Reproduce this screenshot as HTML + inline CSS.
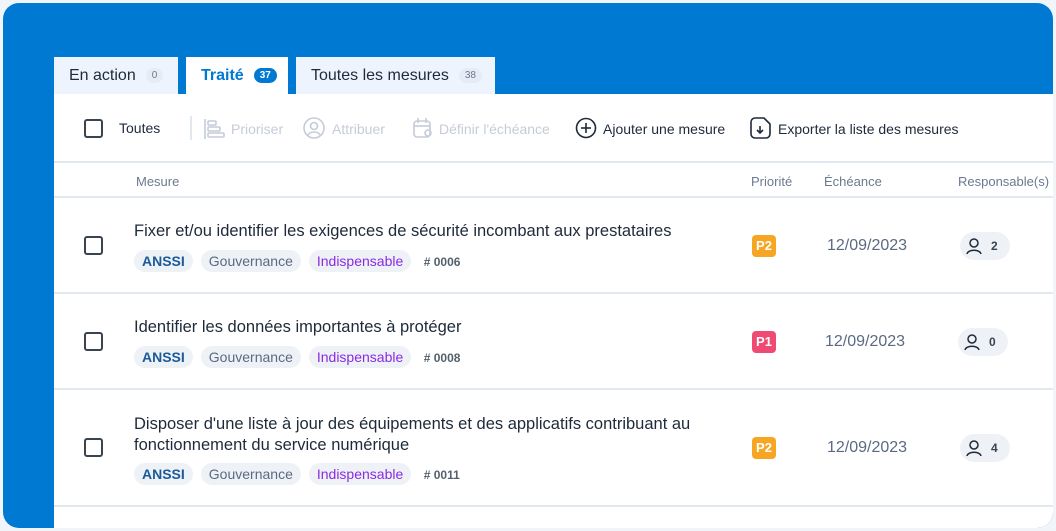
<!DOCTYPE html><html><head><style>
*{margin:0;padding:0;box-sizing:border-box}
body{width:1056px;height:531px;background:#f1f4f9;font-family:"Liberation Sans",sans-serif;position:relative;overflow:hidden;color:#1e2a3a}
.frame{position:absolute;left:3px;top:3px;width:1050px;height:525px;background:#0079d3;border-radius:16px;overflow:hidden}
.panel{position:absolute;left:51px;top:91px;right:0;bottom:0;background:#fff}
.tab{position:absolute;top:54px;height:37px;background:#eef4fd;font-size:16px;display:flex;align-items:center;padding-left:15px;color:#1e2a3a}
.tab.act{background:#fff;color:#0079d3;font-weight:bold}
.cnt{display:inline-block;font-size:10px;border-radius:9px;padding:2px 6px;margin-left:10px;background:#e6ecf5;color:#6b7a90;font-weight:normal}
.act .cnt{background:#0079d3;color:#fff;font-weight:bold}
.a{position:absolute;white-space:nowrap}
.cb{position:absolute;width:19px;height:19px;border:2px solid #3a4350;border-radius:3px}
.hl{position:absolute;left:54px;right:3px;height:2px;background:#e2e8f0}
.tb{font-size:14px;color:#c5ccd8}
.tb2{font-size:14px;color:#1e2a3a}
.hd{font-size:13px;color:#6b7a90}
.t{font-size:16.5px;color:#1e2a3a}
.tag{display:inline-block;font-size:14px;padding:3px 8px;border-radius:11px;background:#eef2f7;margin-right:8px}
.num{font-size:12px;color:#55606e;font-weight:bold}
.p{position:absolute;width:24px;height:22px;border-radius:4px;color:#fff;font-size:13px;font-weight:bold;text-align:center;line-height:22px}
.date{font-size:16px;color:#5a6a82}
.resp{position:absolute;width:50px;height:28px;border-radius:14px;background:#eef2f7;font-size:12px;font-weight:bold;color:#3a4350}
</style></head><body>
<div class="frame">
<div class="tab" style="left:51px;width:124px">En action<span class="cnt">0</span></div>
<div class="tab act" style="left:183px;width:102px">Traité<span class="cnt">37</span></div>
<div class="tab" style="left:293px;width:199px">Toutes les mesures<span class="cnt">38</span></div>
<div class="panel"></div>
</div>
<div class="cb" style="left:84px;top:119px"></div>
<div class="a tb2" style="left:119px;top:120px">Toutes</div>
<div class="a" style="left:190px;top:116px;width:2px;height:24px;background:#e2e8f0"></div>
<svg class="a" style="left:203px;top:118px" width="22" height="22" fill="none" stroke="#c5ccd8" stroke-width="1.6"><line x1="2" y1="1" x2="2" y2="21"/><rect x="5" y="3" width="8" height="4" rx="1"/><rect x="5" y="9" width="12" height="4" rx="1"/><rect x="5" y="15" width="16" height="4" rx="1"/></svg>
<div class="a tb" style="left:231px;top:121px">Prioriser</div>
<svg class="a" style="left:303px;top:117px" width="22" height="22" fill="none" stroke="#c5ccd8" stroke-width="1.6"><circle cx="11" cy="11" r="10"/><circle cx="11" cy="9" r="3.5"/><path d="M5 18c2-4 10-4 12 0"/></svg>
<div class="a tb" style="left:332px;top:121px">Attribuer</div>
<svg class="a" style="left:412px;top:117px" width="22" height="22" fill="none" stroke="#c5ccd8" stroke-width="1.6"><rect x="2" y="4" width="16" height="16" rx="3"/><line x1="6" y1="1" x2="6" y2="6"/><line x1="14" y1="1" x2="14" y2="6"/><line x1="2" y1="9" x2="18" y2="9"/><circle cx="16" cy="16" r="3"/></svg>
<div class="a tb" style="left:439px;top:121px">Définir l'échéance</div>
<svg class="a" style="left:575px;top:117px" width="22" height="22" fill="none" stroke="#1e2a3a" stroke-width="1.6"><circle cx="11" cy="11" r="9.5"/><line x1="11" y1="6" x2="11" y2="16"/><line x1="6" y1="11" x2="16" y2="11"/></svg>
<div class="a tb2" style="left:603px;top:121px">Ajouter une mesure</div>
<svg class="a" style="left:750px;top:116px" width="22" height="24" fill="none" stroke="#1e2a3a" stroke-width="1.6"><path d="M5 2h9l6 6v10a4 4 0 0 1-4 4H5a4 4 0 0 1-4-4V6a4 4 0 0 1 4-4z"/><path d="M10 10v7M7 14l3 3 3-3"/></svg>
<div class="a tb2" style="left:778px;top:121px">Exporter la liste des mesures</div>
<div class="hl" style="top:161px"></div>
<div class="a hd" style="left:136px;top:174px">Mesure</div>
<div class="a hd" style="left:751px;top:174px">Priorité</div>
<div class="a hd" style="left:824px;top:174px">Échéance</div>
<div class="a hd" style="left:958px;top:174px">Responsable(s)</div>
<div class="hl" style="top:196px"></div>

<div class="cb" style="left:84px;top:236px"></div>
<div class="a t" style="left:134px;top:222px">Fixer et/ou identifier les exigences de sécurité incombant aux prestataires</div>
<div class="a" style="left:134px;top:250px"><span class="tag" style="color:#1a5a9a;font-weight:bold">ANSSI</span><span class="tag" style="color:#5a6a82">Gouvernance</span><span class="tag" style="color:#8a2be2">Indispensable</span> <span class="num"># 0006</span></div>
<div class="p" style="left:752px;top:235px;background:#f6a623">P2</div>
<div class="a date" style="left:827px;top:237px">12/09/2023</div>
<div class="resp" style="left:960px;top:232px"><svg class="a" style="left:5px;top:5px" width="18" height="18" fill="none" stroke="#1e2a3a" stroke-width="1.5"><circle cx="9" cy="6" r="4"/><path d="M2 17c1-5 13-5 14 0"/></svg><span class="a" style="left:31px;top:7px">2</span></div>
<div class="hl" style="top:292px"></div>

<div class="cb" style="left:84px;top:332px"></div>
<div class="a t" style="left:134px;top:318px">Identifier les données importantes à protéger</div>
<div class="a" style="left:134px;top:346px"><span class="tag" style="color:#1a5a9a;font-weight:bold">ANSSI</span><span class="tag" style="color:#5a6a82">Gouvernance</span><span class="tag" style="color:#8a2be2">Indispensable</span> <span class="num"># 0008</span></div>
<div class="p" style="left:752px;top:331px;background:#ee4a72">P1</div>
<div class="a date" style="left:825px;top:333px">12/09/2023</div>
<div class="resp" style="left:958px;top:328px"><svg class="a" style="left:5px;top:5px" width="18" height="18" fill="none" stroke="#1e2a3a" stroke-width="1.5"><circle cx="9" cy="6" r="4"/><path d="M2 17c1-5 13-5 14 0"/></svg><span class="a" style="left:31px;top:7px">0</span></div>
<div class="hl" style="top:388px"></div>

<div class="cb" style="left:84px;top:438px"></div>
<div class="a t" style="left:134px;top:414px;line-height:21px">Disposer d'une liste à jour des équipements et des applicatifs contribuant au<br>fonctionnement du service numérique</div>
<div class="a" style="left:134px;top:463px"><span class="tag" style="color:#1a5a9a;font-weight:bold">ANSSI</span><span class="tag" style="color:#5a6a82">Gouvernance</span><span class="tag" style="color:#8a2be2">Indispensable</span> <span class="num"># 0011</span></div>
<div class="p" style="left:752px;top:437px;background:#f6a623">P2</div>
<div class="a date" style="left:827px;top:439px">12/09/2023</div>
<div class="resp" style="left:960px;top:434px"><svg class="a" style="left:5px;top:5px" width="18" height="18" fill="none" stroke="#1e2a3a" stroke-width="1.5"><circle cx="9" cy="6" r="4"/><path d="M2 17c1-5 13-5 14 0"/></svg><span class="a" style="left:31px;top:7px">4</span></div>
<div class="hl" style="top:505px"></div>
</body></html>
